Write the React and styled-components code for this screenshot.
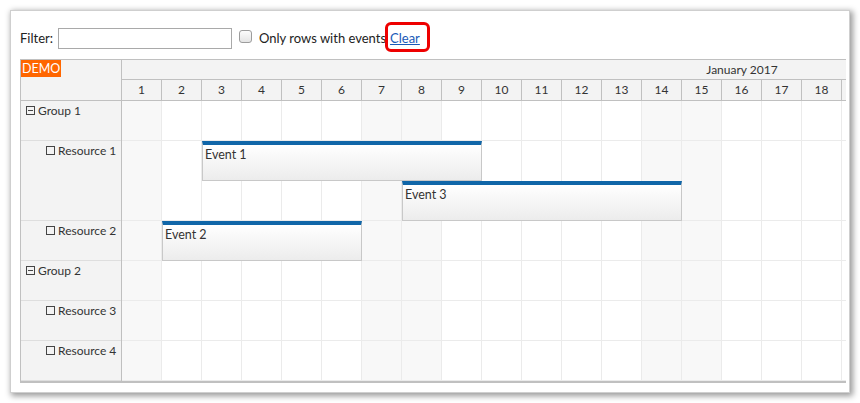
import React from "react";
import styled, { createGlobalStyle } from "styled-components";

const GlobalStyle = createGlobalStyle`
  body {
    margin: 0;
    background: #fff;
    font-family: Lato, "Liberation Sans", sans-serif;
  }
`;

const days = Array.from({ length: 18 }, (_, i) => i + 1);
const weekend = [1, 7, 8, 14, 15];

const rows = [
  { name: "Group 1", group: true, lanes: 1 },
  { name: "Resource 1", lanes: 2, events: [
    { text: "Event 1", start: 3, days: 7, lane: 0 },
    { text: "Event 3", start: 8, days: 7, lane: 1 },
  ] },
  { name: "Resource 2", lanes: 1, events: [{ text: "Event 2", start: 2, days: 5, lane: 0 }] },
  { name: "Group 2", group: true, lanes: 1 },
  { name: "Resource 3", lanes: 1 },
  { name: "Resource 4", lanes: 1 },
];

function App() {
  return (
    <Page>
      <GlobalStyle />
      <Card>
        <Toolbar>
          <Label>Filter:</Label>
          <FilterInput type="text" />
          <Check type="checkbox" />
          <Label>Only rows with events</Label>
          <ClearWrap>
            <ClearLink href="#">Clear</ClearLink>
            <Highlight />
          </ClearWrap>
        </Toolbar>

        <Scheduler>
          <RowHeaders>
            <Corner>
              <Demo>DEMO</Demo>
            </Corner>
            {rows.map((r) => (
              <RowHeader key={r.name} $lanes={r.lanes} $group={r.group}>
                <Toggle>{r.group && <Minus />}</Toggle>
                {r.name}
              </RowHeader>
            ))}
          </RowHeaders>

          <Timeline>
            <MonthRow>
              <Month>January 2017</Month>
            </MonthRow>
            <DayRow>
              {days.map((d) => (
                <DayHeader key={d}>{d}</DayHeader>
              ))}
              <DayHeader />
            </DayRow>
            {rows.map((r) => (
              <GridRow key={r.name} $lanes={r.lanes}>
                {[...days, 19].map((d) => (
                  <Cell key={d} $weekend={weekend.includes(d)} />
                ))}
                {(r.events || []).map((e) => (
                  <Event
                    key={e.text}
                    style={{ left: (e.start - 1) * 40, top: e.lane * 40, width: e.days * 40 }}
                  >
                    {e.text}
                  </Event>
                ))}
              </GridRow>
            ))}
          </Timeline>
        </Scheduler>
      </Card>
    </Page>
  );
}

export default App;

const Page = styled.div`
  padding: 10px;
`;

const Card = styled.div`
  box-sizing: border-box;
  width: 840px;
  height: 383px;
  border: 1px solid #cfcfcf;
  background: #fff;
  padding: 0 9px;
  box-shadow: 2px 2px 6px 1px rgba(0, 0, 0, 0.4);
`;

const Toolbar = styled.div`
  display: flex;
  align-items: center;
  height: 20px;
  margin: 17px 0 11px;
  font-size: 13px;
  color: #222;
`;

const Label = styled.span`
  line-height: 16px;
`;

const FilterInput = styled.input`
  box-sizing: border-box;
  width: 174px;
  height: 21px;
  margin: 0 0 0 5px;
  border: 1px solid #a9a9a9;
  padding: 1px 3px;
  font: inherit;
`;

const Check = styled.input`
  appearance: none;
  box-sizing: border-box;
  width: 13px;
  height: 13px;
  margin: 0 7px 0 7px;
  border: 1px solid #9c9c9c;
  border-radius: 3px;
  background: linear-gradient(#fcfcfc, #e4e4e4);
  position: relative;
  top: -2px;
`;

const ClearWrap = styled.span`
  position: relative;
  margin-left: 4px;
  display: inline-flex;
`;

const ClearLink = styled.a`
  color: #1a5ab8;
  text-decoration: underline;
  line-height: 16px;
`;

const Highlight = styled.span`
  position: absolute;
  left: -5px;
  right: -10px;
  top: -8px;
  bottom: -6px;
  border: 3px solid #ee0000;
  border-radius: 6px;
`;

const Scheduler = styled.div`
  display: flex;
  width: 825px;
  border-top: 1px solid #c0c0c0;
  border-left: 1px solid #c0c0c0;
  border-bottom: 2px solid #c0c0c0;
  overflow: hidden;
  font-size: 12px;
  color: #333;
`;

const RowHeaders = styled.div`
  flex: none;
  width: 100px;
  border-right: 1px solid #c0c0c0;
  background: #f3f3f3;
`;

const Corner = styled.div`
  height: 40px;
  border-bottom: 1px solid #c0c0c0;
`;

const Demo = styled.span`
  display: inline-block;
  background: #ff6600;
  color: #fff;
  font-size: 12.5px;
  line-height: 17px;
  padding: 0 1px;
`;

const RowHeader = styled.div`
  box-sizing: border-box;
  display: flex;
  align-items: flex-start;
  height: ${(p) => p.$lanes * 40}px;
  padding: 2px 0 0 ${(p) => (p.$group ? 5 : 25)}px;
  border-bottom: 1px solid #dedede;
  font-size: 12px;
  line-height: 15px;
`;

const Toggle = styled.span`
  position: relative;
  box-sizing: border-box;
  flex: none;
  width: 9px;
  height: 9px;
  margin: 3px 3px 0 0;
  border: 1px solid #444;
`;

const Minus = styled.span`
  position: absolute;
  left: 1px;
  right: 1px;
  top: 3px;
  height: 1px;
  background: #444;
`;

const Timeline = styled.div`
  flex: 1;
  min-width: 0;
  overflow: hidden;
`;

const MonthRow = styled.div`
  height: 19px;
  border-bottom: 1px solid #c0c0c0;
  background: #f3f3f3;
`;

const Month = styled.div`
  width: 1240px;
  text-align: center;
  line-height: 19px;
`;

const DayRow = styled.div`
  display: flex;
  height: 20px;
  border-bottom: 1px solid #c0c0c0;
  background: #f3f3f3;
`;

const DayHeader = styled.div`
  box-sizing: border-box;
  flex: none;
  width: 40px;
  border-right: 1px solid #c0c0c0;
  text-align: center;
  line-height: 20px;
`;

const GridRow = styled.div`
  position: relative;
  display: flex;
  height: ${(p) => p.$lanes * 40}px;
`;

const Cell = styled.div`
  box-sizing: border-box;
  flex: none;
  width: 40px;
  border-right: 1px solid #ebebeb;
  border-bottom: 1px solid #ebebeb;
  background: ${(p) => (p.$weekend ? "#f8f8f8" : "#fff")};
`;

const Event = styled.div`
  position: absolute;
  box-sizing: border-box;
  height: 40px;
  border: 1px solid #c8c8c8;
  border-top: 4px solid #1066a8;
  padding: 2px 2px;
  background: linear-gradient(#ffffff, #ececec);
  font-size: 12.5px;
  line-height: 15px;
  color: #333;
`;
